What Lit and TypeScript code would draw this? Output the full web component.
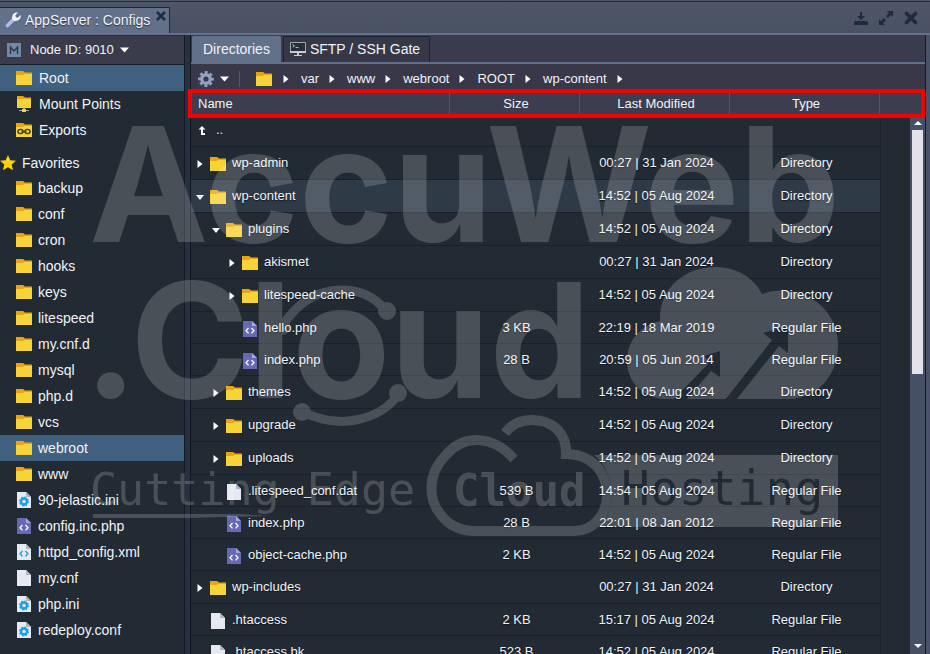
import { LitElement, html, svg, css, nothing } from "lit";
import { customElement } from "lit/decorators.js";
import { classMap } from "lit/directives/class-map.js";

type IconName = "folder" | "mount" | "export" | "gearfile" | "php" | "xml" | "file";

interface Entry {
  name: string;
  icon: IconName;
  depth: number;
  open?: boolean;
  size?: string;
  date: string;
}

const page = svg`<path fill="#e6eaf0" d="M1 0h9l5 5v11H1z"/><path fill="#aeb6c4" d="M10 0l5 5h-5z"/>`;
const folderShape = svg`<path fill="#eba50c" d="M0 1h7l2 1.500h7V6H0z"/><path fill="#f6d338" d="M0 5h7l1-1h8v11H0z"/>`;

const shapes = {
  folder: folderShape,
  mount: svg`<path fill="#eba50c" d="M1 0h6l2 1.500h6V4H1z"/><path fill="#f6d338" d="M1 3h14v9H1z"/>
    <path fill="#d9a514" d="M7 12h2v2H7z"/><path fill="#9aa4b4" d="M3 14h10v1H3z"/><path fill="#f6d338" d="M6 13h4v3H6z"/>`,
  export: svg`${folderShape}<g fill="none" stroke="#4a4423" stroke-width="1.500"><rect x="2" y="7.500" width="5" height="4" rx="2"/>
    <rect x="9" y="7.500" width="5" height="4" rx="2"/><path d="M5.500 9.500h5"/></g>`,
  gearfile: svg`${page}<circle cx="8" cy="9.500" r="3" fill="none" stroke="#16a0f0" stroke-width="2.400"/>
    <circle cx="8" cy="9.500" r="4.200" fill="none" stroke="#16a0f0" stroke-width="1.500" stroke-dasharray="1.650 1.650"/>`,
  php: svg`<path fill="#6669b5" d="M1 0h9l5 5v11H1z"/><path fill="#a5a8dc" d="M10 0l5 5h-5z"/>
    <path fill="none" stroke="#fff" stroke-width="1.300" d="M6.500 7L4 9.700l2.500 2.700M9.500 7L12 9.700l-2.500 2.700"/>`,
  xml: svg`${page}<path fill="none" stroke="#1ba5dc" stroke-width="1.400" d="M6.500 7L4 9.700l2.500 2.700M9.500 7L12 9.700l-2.500 2.700"/>`,
  file: page,
};

const icon = (name: IconName) =>
  html`<svg class="icon" viewBox="0 0 16 16" aria-hidden="true">${shapes[name]}</svg>`;

const caretDown = html`<svg width="9" height="6" viewBox="0 0 9 6" aria-hidden="true"><path fill="#fff" d="M0 .5h9L4.500 5.500z"/></svg>`;
const caretRight = html`<svg width="6" height="8" viewBox="0 0 6 8" aria-hidden="true"><path fill="#fff" d="M.5 0v8L5.500 4z"/></svg>`;
const caretOpen = html`<svg width="8" height="5" viewBox="0 0 8 5" aria-hidden="true"><path fill="#fff" d="M0 0h8L4 5z"/></svg>`;

const places: [string, IconName][] = [["Root", "folder"], ["Mount Points", "mount"], ["Exports", "export"]];

const favorites: [string, IconName][] = [
  ["backup", "folder"], ["conf", "folder"], ["cron", "folder"], ["hooks", "folder"], ["keys", "folder"],
  ["litespeed", "folder"], ["my.cnf.d", "folder"], ["mysql", "folder"], ["php.d", "folder"], ["vcs", "folder"],
  ["webroot", "folder"], ["www", "folder"], ["90-jelastic.ini", "gearfile"], ["config.inc.php", "php"],
  ["httpd_config.xml", "xml"], ["my.cnf", "file"], ["php.ini", "gearfile"], ["redeploy.conf", "gearfile"],
];

const entries: Entry[] = [
  { name: "wp-admin", icon: "folder", depth: 0, date: "00:27 | 31 Jan 2024" },
  { name: "wp-content", icon: "folder", depth: 0, open: true, date: "14:52 | 05 Aug 2024" },
  { name: "plugins", icon: "folder", depth: 1, open: true, date: "14:52 | 05 Aug 2024" },
  { name: "akismet", icon: "folder", depth: 2, date: "00:27 | 31 Jan 2024" },
  { name: "litespeed-cache", icon: "folder", depth: 2, date: "14:52 | 05 Aug 2024" },
  { name: "hello.php", icon: "php", depth: 2, size: "3 KB", date: "22:19 | 18 Mar 2019" },
  { name: "index.php", icon: "php", depth: 2, size: "28 B", date: "20:59 | 05 Jun 2014" },
  { name: "themes", icon: "folder", depth: 1, date: "14:52 | 05 Aug 2024" },
  { name: "upgrade", icon: "folder", depth: 1, date: "14:52 | 05 Aug 2024" },
  { name: "uploads", icon: "folder", depth: 1, date: "14:52 | 05 Aug 2024" },
  { name: ".litespeed_conf.dat", icon: "file", depth: 1, size: "539 B", date: "14:54 | 05 Aug 2024" },
  { name: "index.php", icon: "php", depth: 1, size: "28 B", date: "22:01 | 08 Jan 2012" },
  { name: "object-cache.php", icon: "php", depth: 1, size: "2 KB", date: "14:52 | 05 Aug 2024" },
  { name: "wp-includes", icon: "folder", depth: 0, date: "00:27 | 31 Jan 2024" },
  { name: ".htaccess", icon: "file", depth: 0, size: "2 KB", date: "15:17 | 05 Aug 2024" },
  { name: ".htaccess.bk", icon: "file", depth: 0, size: "523 B", date: "14:52 | 05 Aug 2024" },
];

@customElement("brand-watermark")
export class BrandWatermark extends LitElement {
  static styles = css`
    :host { display: block; position: absolute; inset: 0; pointer-events: none; overflow: hidden; }
    svg { display: block; width: 100%; height: auto; }
    .art { opacity: 0.18; }
    .word { font: 700 160px Inter, "Liberation Sans", sans-serif; }
    .tag { font: 45px "DejaVu Sans Mono", monospace; }
    .tag-large { font: 48px "DejaVu Sans Mono", monospace; }
    .tag-bold { font: bold 44px "DejaVu Sans Mono", monospace; }
  `;
  render() {
    return html`<svg viewBox="0 0 930 654" aria-hidden="true">
      <defs>
        <mask id="arrows" maskUnits="userSpaceOnUse" x="620" y="260" width="230" height="150">
          <rect x="620" y="260" width="230" height="150" fill="#fff"/>
          <path d="M673 400L710 362 704 356 720 351V377L711 371 686 400zM725 400L772 340 763 333 788 326V353L779 346 736 400z" fill="#000"/>
        </mask>
        <mask id="label" maskUnits="userSpaceOnUse" x="590" y="450" width="260" height="80">
          <rect x="590" y="450" width="260" height="80" fill="#fff"/>
          <text class="tag-large" x="621" y="505" fill="#000">Hosting</text>
        </mask>
      </defs>
      <g class="art" fill="#fff">
        <text class="word" x="89" y="242">Accu</text>
        <text class="word" x="486" y="242">Web</text>
        <text class="word" x="84" y="398">.Cloud</text>
        <g fill="none" stroke="#fff" stroke-width="9">
          <path d="M283 325Q306 290 342 290Q370 290 386 311"/>
          <path d="M303 412Q330 425 356 420Q386 414 399 393"/>
        </g>
        <circle cx="282" cy="327" r="8"/><circle cx="387" cy="311" r="9"/>
        <circle cx="302" cy="412" r="9"/><circle cx="398" cy="393" r="9"/>
        <path mask="url(#arrows)" d="M666 399C643 399 627 382 627 361C627 339 641 326 660 321V318C660 288 685 267 715 267C737 267 754 278 762 294C800 281 838 307 838 345C838 375 818 398 790 399z"/>
        <text class="tag" x="90" y="505">Cutting Edge</text>
        <path d="M93 514H240L270 516 184 518H93z"/>
        <path mask="url(#label)" d="M594 455H838V527H599C608 518 612 506 612 494C612 478 605 464 594 455z"/>
        <path fill="none" stroke="#fff" stroke-width="10" d="M514 459C492 434 463 435 446 455C427 474 428 500 441 515C450 527 462 531 476 531H574C594 531 607 514 607 495C607 470 590 454 566 454C567 432 551 420 532 420C520 420 511 425 505 433"/>
        <text class="tag-bold" x="453" y="506">Cloud</text>
      </g>
    </svg>`;
  }
}

@customElement("app-root")
export class AppRoot extends LitElement {
  static styles = css`
    :host {
      display: flex; flex-direction: column; position: relative; height: 100vh; overflow: hidden;
      box-sizing: border-box; background: #222b34; color: #f0f3f7;
      font: 13px/16px "Liberation Sans", Arial, sans-serif;
    }
    * { box-sizing: border-box; }
    button {
      display: flex; align-items: center; margin: 0; padding: 0; border: 0; background: none;
      color: inherit; font: inherit; cursor: pointer;
    }
    svg { flex: none; }
    ul { list-style: none; margin: 0; padding: 0; }
    a { color: inherit; text-decoration: none; }
    .icon { width: 16px; height: 16px; display: block; }

    .titlebar {
      flex: none; height: 35px; display: flex; align-items: flex-end; justify-content: space-between;
      background: linear-gradient(#4f5667, #495164); border-top: 1px solid #4f5667;
      border-bottom: 2px solid #63718c; box-shadow: inset 0 1px #252e3e;
    }
    .window-tab {
      display: flex; height: 26px; padding: 0 3px 0 5px; background: #63708a;
      border-top: 1px solid #1e2838; border-right: 1px solid #1e2838; font-size: 14px;
      text-shadow: 0 1px 1px #2a3448;
    }
    .window-tab .label { display: flex; align-items: center; gap: 4px; height: 24px; }
    .window-tab .close { align-self: flex-start; margin: 3px 0 0 6px; }
    .tools { display: flex; align-items: center; gap: 11px; height: 30px; padding-right: 12px; }

    .main { flex: 1; min-height: 0; display: flex; background: #273140; }
    .sidebar { flex: none; width: 185px; border-right: 1px solid #131c26; background: #222b34; }
    .node { display: flex; align-items: center; gap: 9px; height: 30px; padding-left: 7px; background: #3a3c4b; border-bottom: 1px solid #151d28; border-top: 1px solid #252d3c; }
    .node button { gap: 6px; }
    .item { width: 100%; height: 26px; padding-left: 16px; gap: 6px; font-size: 14px; }
    .item.selected { background: #40607f; }
    .places .item { gap: 7px; }
    .heading { display: flex; align-items: center; gap: 6px; height: 32px; padding-top: 8px; font-size: 14px; }

    .panel { flex: 1; min-width: 0; display: flex; flex-direction: column; margin-left: 5px; border-left: 1px solid #0f1720; background: #222b34; }
    .edge { flex: none; width: 5px; background: #4a5267; border-left: 1px solid #111a27; }
    .tabs { flex: none; display: flex; align-items: flex-end; gap: 2px; height: 29px; padding-left: 1px; background: #3a3c4d; border-bottom: 2px solid #63708a; }
    .tab { height: 26px; padding: 0 10px 2px; font-size: 14px; border: 1px solid #1b2331; border-bottom: 0; gap: 4px; border-radius: 2px 2px 0 0; background: #363848; }
    .tab.second { padding: 0 9px 2px 6px; }
    .tab.active { background: #63708a; border-color: #63708a; }
    .path { flex: none; display: flex; align-items: center; height: 29px; padding-left: 7px; background: #383849; }
    .gear { gap: 6px; }
    .divider { width: 1px; height: 16px; margin: 0 16px 0 10px; background: #55586a; }
    .crumb { display: flex; align-items: center; }
    .crumb .arrow { display: flex; margin: 0 12px 0 10px; }
    .crumb:first-of-type .arrow, .crumb svg + .arrow { margin-left: 11px; }

    .grid { position: relative; flex: 1; min-height: 0; display: flex; }
    .frame { position: absolute; top: -4px; left: -3px; right: 0; height: 29px; border: 4px solid #f80000; }
    .listing { flex: 1; min-width: 0; overflow: hidden; }
    table { width: 100%; table-layout: fixed; border-spacing: 0; }
    th, td { padding: 0; text-align: center; font-weight: normal; }
    th { height: 21px; background: #3c3e50; border-right: 1px solid #52566a; }
    th:first-child { text-align: left; padding-left: 7px; }
    th:last-child { border-right: 0; }
    th:not(:first-child), td:not(:first-child) { padding-left: 3px; }
    td { height: 32px; border-bottom: 1px solid #18212b; text-shadow: 0 1px 1px #10161d; }
    td:last-child { border-bottom: 0; border-left: 1px solid #1b242e; }
    .dir td { height: 33px; }
    .chosen td:not(:last-child) { background: #2e3a46; }
    .col-size { width: 130px; }
    .col-wide { width: 150px; }
    .col-rest { width: 30px; }
    .name { display: flex; align-items: center; padding-left: 3px; }
    .up { gap: 10px; padding-left: 7px; }
    .indent { flex: none; width: calc(var(--depth) * 16px); }
    .toggle { flex: none; display: flex; justify-content: center; width: 12px; margin-right: 4px; padding-top: 2px; }
    .name .icon { margin: 2px 6px 0 0; }

    .scroll { flex: none; width: 15px; display: flex; flex-direction: column; background: #465064; }
    .scroll-head { flex: none; height: 21px; background: #3c3e50; }
    .step { flex: none; justify-content: center; height: 16px; }
    .track { flex: 1; padding: 0 2px; }
    .thumb { height: 48%; background: #e3e2e8; }
  `;

  private sideItem([name, kind]: [string, IconName]) {
    const selected = name === "Root" || name === "webroot";
    return html`<li><button class=${classMap({ item: true, selected })}>${icon(kind)}<span>${name}</span></button></li>`;
  }

  private row(e: Entry) {
    const dir = e.icon === "folder";
    return html`<tr class=${classMap({ dir, chosen: e.name === "wp-content" })}>
      <td><div class="name">
        <span class="indent" style="--depth:${e.depth}"></span>
        ${dir
          ? html`<button class="toggle" aria-label="Toggle ${e.name}" aria-expanded=${e.open ? "true" : "false"}>${e.open ? caretOpen : caretRight}</button>`
          : html`<span class="toggle"></span>`}
        ${icon(e.icon)}<span>${e.name}</span>
      </div></td>
      <td>${e.size ?? nothing}</td>
      <td>${e.date}</td>
      <td>${dir ? "Directory" : "Regular File"}</td>
      <td></td>
    </tr>`;
  }

  render() {
    return html`
      <header class="titlebar">
        <div class="window-tab">
          <span class="label">
            <svg width="16" height="16" viewBox="0 0 16 16" aria-hidden="true">
              <path stroke="#b4baf0" stroke-width="3.600" stroke-linecap="round" d="M2.500 13.500L8 8"/>
              <path fill="#f4f6fa" d="M13 0.600L10.400 3.200l.4 2 2 .5L15.600 3C16.400 6 14.300 8.700 11.500 8.700L9.600 9.200 6.800 6.400 7.300 4.500C7.300 1.700 10 -.2 13 .6z"/>
            </svg>
            AppServer : Configs</span>
          <button class="close" aria-label="Close tab">
            <svg width="10" height="10" viewBox="0 0 10 10"><path stroke="#1d2d45" stroke-width="2.600" d="M1 1l8 8M9 1L1 9"/></svg>
          </button>
        </div>
        <div class="tools">
          <button aria-label="Minimize"><svg width="14" height="14" viewBox="0 0 14 14"><path fill="#1d2b3e" d="M6 1h2v4h3L7 9 3 5h3zM1 10h12l1 1v3H0v-3z"/></svg></button>
          <button aria-label="Maximize"><svg width="14" height="14" viewBox="0 0 14 14"><path fill="#1d2b3e" d="M8 0h6v6l-2-2-3 3-2-2 3-3zM0 8l2 2 3-3 2 2-3 3 2 2H0z"/></svg></button>
          <button aria-label="Close"><svg width="14" height="14" viewBox="0 0 14 14"><path stroke="#1d2b3e" stroke-width="3.600" stroke-linecap="round" d="M2.500 2.500l9 9M11.500 2.500l-9 9"/></svg></button>
        </div>
      </header>
      <div class="main">
        <nav class="sidebar">
          <div class="node">
            <svg width="14" height="14" viewBox="0 0 14 14" aria-hidden="true"><path fill="#7389a8" d="M0 0h14v14H0z"/><path fill="none" stroke="#27364a" stroke-width="1.400" d="M3.500 11V4L7 8l3.500-4v7"/></svg>
            <button>Node ID: 9010 ${caretDown}</button>
          </div>
          <ul class="places">${places.map((p) => this.sideItem(p))}</ul>
          <div class="heading">
            <svg width="16" height="16" viewBox="0 0 16 16" aria-hidden="true"><path fill="#ffd20a" d="M8 0l2.300 5.300 5.700.5-4.300 3.800 1.300 5.700L8 12.300l-5 3 1.300-5.700L0 5.800l5.700-.5z"/></svg>
            Favorites
          </div>
          <ul>${favorites.map((p) => this.sideItem(p))}</ul>
        </nav>
        <section class="panel">
          <div class="tabs" role="tablist">
            <button class="tab active" role="tab" aria-selected="true">Directories</button>
            <button class="tab second" role="tab" aria-selected="false">
              <svg width="16" height="16" viewBox="0 0 16 16" aria-hidden="true">
                <path fill="#252f38" stroke="#9aa3ad" d="M.5 1.500h15v9H.5z"/><path fill="#c5cbd2" d="M0 10h16v2H0zM7 12h2v2H7zM4 14h8v1H4z"/>
                <path fill="none" stroke="#d4dbe2" stroke-width=".8" d="M2.500 3.500l2 1.300-2 1.300M5.500 6.500h3"/>
              </svg>
              SFTP / SSH Gate</button>
          </div>
          <div class="path">
            <button class="gear" aria-label="Options">
              <svg width="16" height="16" viewBox="0 0 16 16"><g fill="none" stroke="#8fa3c6">
                <circle cx="8" cy="8" r="4.300" stroke-width="3.400"/><circle cx="8" cy="8" r="6.600" stroke-width="2.600" stroke-dasharray="2.900 2.284" stroke-dashoffset="1.450"/></g></svg>
              ${caretDown}
            </button>
            <span class="divider"></span>
            <span class="crumb">${icon("folder")}<span class="arrow">${caretRight}</span></span>
            ${["var", "www", "webroot", "ROOT", "wp-content"].map(
              (c) => html`<span class="crumb"><a href="#">${c}</a><span class="arrow">${caretRight}</span></span>`
            )}
          </div>
          <div class="grid">
            <div class="listing">
              <table>
                <colgroup><col /><col class="col-size" /><col class="col-wide" /><col class="col-wide" /><col class="col-rest" /></colgroup>
                <thead><tr><th>Name</th><th>Size</th><th>Last Modified</th><th>Type</th><th></th></tr></thead>
                <tbody>
                  <tr class="dir"><td><div class="name up">
                    <svg width="8" height="9" viewBox="0 0 8 9" aria-hidden="true"><path fill="#fff" d="M4 0l3.500 3.500H5V7h2v2H3V3.500H.5z"/></svg>..
                  </div></td><td></td><td></td><td></td><td></td></tr>
                  ${entries.map((e) => this.row(e))}
                </tbody>
              </table>
            </div>
            <div class="scroll">
              <div class="scroll-head"></div>
              <button class="step" aria-label="Scroll up"><svg width="8" height="5" viewBox="0 0 8 5"><path fill="#fff" d="M0 5h8L4 1z"/></svg></button>
              <div class="track"><div class="thumb"></div></div>
              <button class="step" aria-label="Scroll down"><svg width="8" height="5" viewBox="0 0 8 5"><path fill="#fff" d="M0 0h8L4 4z"/></svg></button>
            </div>
            <div class="frame"></div>
          </div>
        </section>
        <div class="edge"></div>
      </div>
      <brand-watermark></brand-watermark>
    `;
  }
}
